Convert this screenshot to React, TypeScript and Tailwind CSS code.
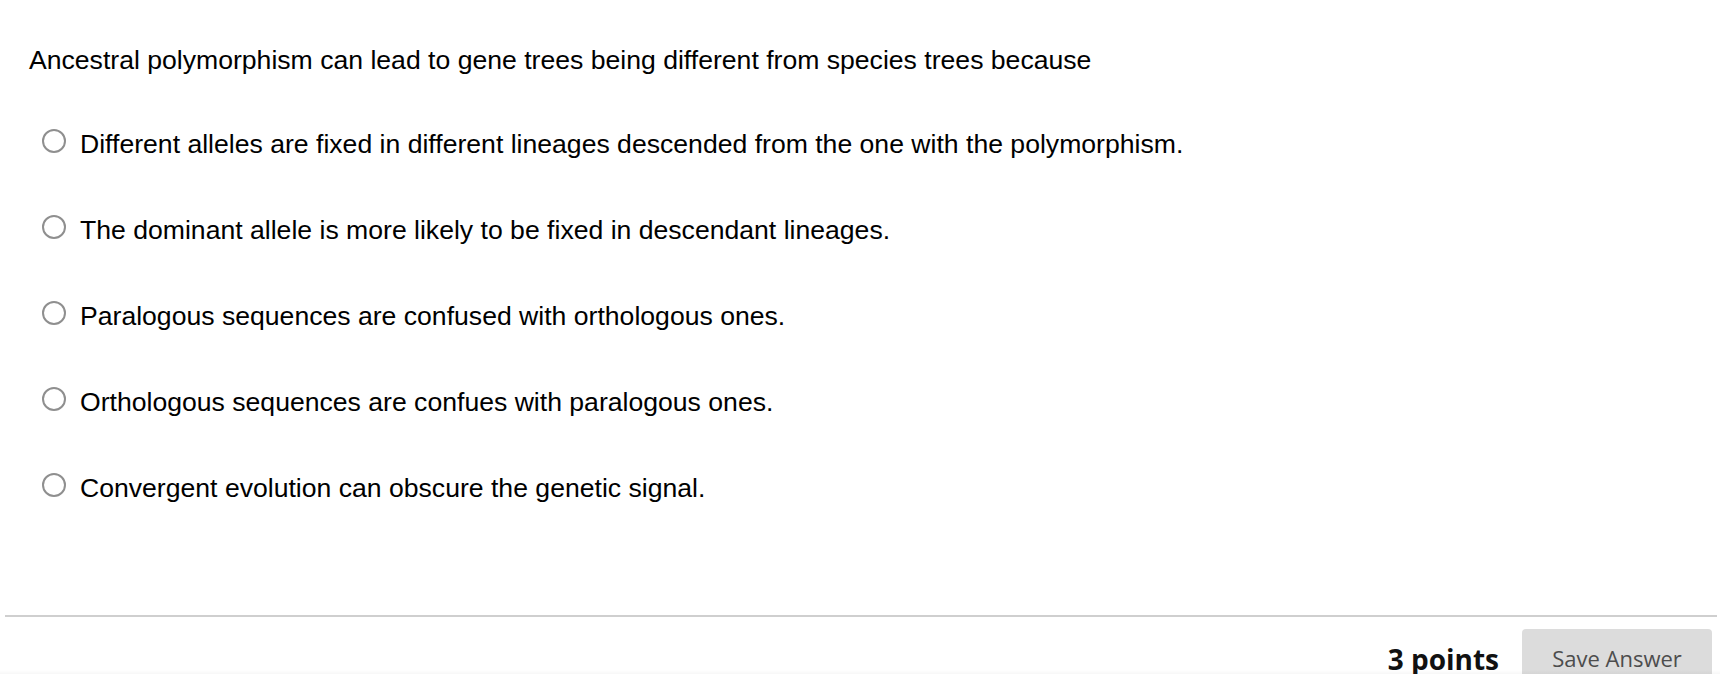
const options = [
  "Different alleles are fixed in different lineages descended from the one with the polymorphism.",
  "The dominant allele is more likely to be fixed in descendant lineages.",
  "Paralogous sequences are confused with orthologous ones.",
  "Orthologous sequences are confues with paralogous ones.",
  "Convergent evolution can obscure the genetic signal.",
];

export default function App() {
  return (
    <div className="relative min-h-screen overflow-hidden bg-white text-black">
      <div className="pt-[45px] pl-[29px] font-['Liberation_Sans',Arial,sans-serif] text-[26.6px] leading-[30px]">
        <p>Ancestral polymorphism can lead to gene trees being different from species trees because</p>

        <ul className="mt-[54px] flex flex-col gap-[56px] pl-[13px]">
          {options.map((o) => (
            <li key={o} className="flex items-start gap-[14px]">
              <span className="h-[24px] w-[24px] shrink-0 rounded-full border-2 border-[#8f8f8f] bg-white" />
              <span>{o}</span>
            </li>
          ))}
        </ul>
      </div>

      <div className="mt-[112px] ml-[5px] mr-[3px] h-[2px] bg-[#cfcfcf]" />

      <div className="flex items-start justify-end gap-[23px] pt-[12px] pr-[8px] font-['Open_Sans',sans-serif]">
        <span className="mt-[9px] text-[28px] font-bold leading-normal text-[#111]">3 points</span>
        <button className="flex h-[60px] w-[190px] items-start justify-center self-start rounded-t-[4px] bg-[#dcdcdc] pt-[13px] text-[22px] leading-normal text-[#4d4d4d]">
          Save Answer
        </button>
      </div>

      {/* bottom bar overlapping the footer */}
      <div className="absolute bottom-0 left-0 right-0 flex flex-col">
        <div className="h-[12px] bg-gradient-to-b from-white/0 to-black/10" />
        <div className="h-[2px] bg-[#c9c9c9]" />
        <div className="h-[5px] bg-[#eeeeee]" />
      </div>
    </div>
  );
}
